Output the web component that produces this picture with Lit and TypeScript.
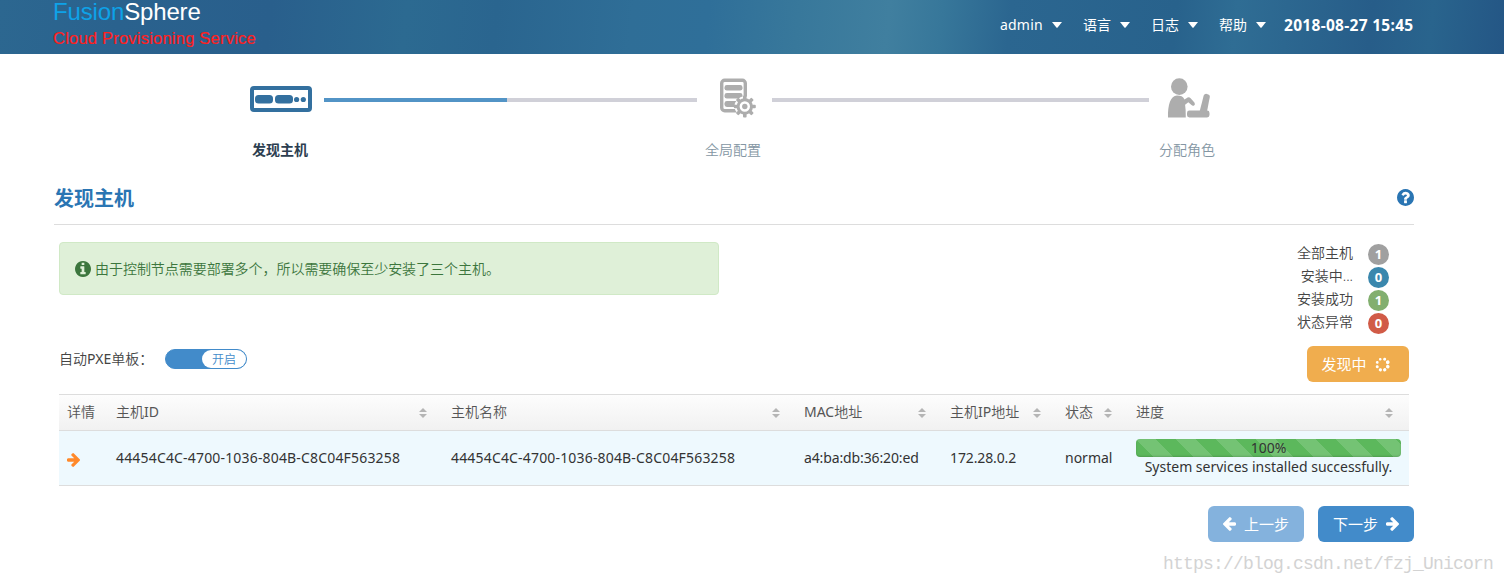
import { LitElement, html, css, svg } from "lit";
import { customElement, property } from "lit/decorators.js";

const ARROW =
  "M1472 896q0 54-37 91l-651 651q-39 37-91 37-51 0-90-37l-75-75q-38-38-38-91t38-91l293-293H117q-52 0-84.5-37.5T0 960V832q0-53 32.5-90.5T117 704h704L528 410q-38-36-38-90t38-90l75-75q38-38 90-38 53 0 91 38l651 651q37 35 37 90z";
const DISC =
  "M1664 896q0 209-103 385.5T1281.5 1561 896 1664t-385.5-103T231 1281.5 128 896t103-385.5T510.5 231 896 128t385.5 103T1561 510.5 1664 896z";
const INFO =
  "M1152 1376v-160q0-14-9-23t-23-9h-96V672q0-14-9-23t-23-9H672q-14 0-23 9t-9 23v160q0 14 9 23t23 9h96v320h-96q-14 0-23 9t-9 23v160q0 14 9 23t23 9h448q14 0 23-9t9-23zM1024 480V320q0-14-9-23t-23-9H800q-14 0-23 9t-9 23v160q0 14 9 23t23 9h192q14 0 23-9t9-23z";
const QUESTION =
  "M1024 1376v-192q0-14-9-23t-23-9H800q-14 0-23 9t-9 23v192q0 14 9 23t23 9h192q14 0 23-9t9-23zm256-672q0-88-55.5-163T1086 425t-170-41q-243 0-371 213-15 24 8 42l132 100q7 6 19 6 16 0 25-12 53-68 86-92 34-24 86-24 48 0 85.5 26t37.5 59q0 38-20 61t-68 45q-63 28-115.5 86.5T768 1020v36q0 14 9 23t23 9h192q14 0 23-9t9-23q0-19 21.5-49.5T1100 957q32-18 49-28.5t46-35 44.5-48 28-60.5 12.5-81z";

@customElement("ui-icon")
export class UiIcon extends LitElement {
  @property() name = "";
  static styles = css`
    :host { display: inline-flex; flex: none; }
    svg { display: block; fill: currentColor; overflow: visible; }
  `;
  render() {
    switch (this.name) {
      case "right":
        return html`<svg width="13" height="14" viewBox="0 117 1472 1558"><path d=${ARROW} /></svg>`;
      case "left":
        return html`<svg width="13" height="14" viewBox="0 117 1472 1558"><path transform="translate(1472 0) scale(-1 1)" d=${ARROW} /></svg>`;
      case "info":
        return html`<svg width="16" height="16" viewBox="128 128 1536 1536"><path fill-rule="evenodd" d=${INFO + DISC} /></svg>`;
      case "help":
        return html`<svg width="17" height="17" viewBox="128 128 1536 1536"><path fill-rule="evenodd" d=${QUESTION + DISC} /></svg>`;
      case "sort":
        return html`<svg width="8" height="10" viewBox="0 0 8 10"><path d="M4 0l4 4H0zM4 10L0 6h8z" /></svg>`;
      case "caret":
        return html`<svg width="10" height="6" viewBox="0 0 10 6"><path d="M0 0h10L5.6 5.6q-.6.5-1.2 0z" /></svg>`;
      case "spinner":
        return html`<svg width="15" height="15" viewBox="-7.5 -7.5 15 15">
          ${[1.85, 1.8, 1.7, 1.6, 1.5, 1.4, 1.3, 1.5].map(
            (r, i) => svg`<circle r=${r} cy="-5.7" transform=${`rotate(${i * 45 + 67})`} />`
          )}
        </svg>`;
      case "server":
        return html`<svg width="62" height="26" viewBox="0 0 62 26">
          <rect x="2" y="2" width="58" height="22" rx="2" fill="#fff" stroke="#33709f" stroke-width="4" />
          <rect x="5" y="9" width="18" height="8.5" rx="3.5" /><rect x="25" y="9" width="18" height="8.5" rx="3.5" />
          <circle cx="46.6" cy="13.5" r="2.6" /><circle cx="53.3" cy="13.5" r="2.6" />
        </svg>`;
      case "config":
        return html`<svg width="36" height="40" viewBox="0 0 36 40">
          <rect x="1.7" y="2.2" width="23.6" height="30.6" rx="3" fill="#fff" stroke="currentColor" stroke-width="3.4" />
          <rect x="4.5" y="7" width="18" height="5.6" rx="2.4" /><rect x="4.5" y="15" width="18" height="5.6" rx="2.4" />
          <rect x="4.5" y="23" width="14" height="6" rx="2.4" />
          <circle cx="24.8" cy="28.5" r="10.3" fill="#fff" />
          <g transform="translate(24.8 28.5)">
            ${[0, 45, 90, 135, 180, 225, 270, 315].map(
              (a) => svg`<rect x="-1.8" y="-11" width="3.6" height="5" rx="1" transform=${`rotate(${a})`} />`
            )}
            <circle r="6.7" fill="#fff" stroke="currentColor" stroke-width="3" />
            <circle r="2.7" />
          </g>
        </svg>`;
      case "person":
        return html`<svg width="44" height="40" viewBox="0 0 44 40">
          <circle cx="12.3" cy="8.6" r="8.3" />
          <path d="M1 39.5C.7 27 3.5 17.6 10 17.6c3.8 0 6 1 7.5 3.8l3.1-1.8q1.5-.8 3 .6l3.8 4.2q1.3 2-.3 3.1-1.5.8-2.9-.7l-2.900-2.500-3.200 2.500q.8 5 .7 12.700z" />
          <rect x="20" y="32.5" width="22.5" height="7" rx="2.4" />
          <path d="M32.5 34l4.2-16.5q.8-2 3.2-1.6 3.2.6 2.9 3.2L39.5 36z" />
        </svg>`;
    }
    return html``;
  }
}

@customElement("app-root")
export class AppRoot extends LitElement {
  static styles = css`
    * { box-sizing: border-box; }
    :host {
      display: block; position: relative; height: 583px; overflow: hidden; background: #fff;
      font: 14px/20px "Noto Sans", "Noto Sans CJK SC", sans-serif; color: #333; white-space: nowrap;
    }
    .top {
      height: 54px; padding: 0 90px 0 54px; display: flex; justify-content: space-between;
      color: #fff;
      background: linear-gradient(96deg, #2c6790 0, #2a628e 8%, #295f8c 18%, #2c6a91 27%, #2a658f 33%, #2f6e97 42%, #2f6f99 47%, #38789b 53%, #407f9f 59%, #37779a 62.5%, #2b6690 67%, #28628c 78%, #2f6d94 82%, #275d89 91%, #29648d 95%, #245685 100%);
    }
    .logo { font-family: "Liberation Sans", sans-serif; display: flex; flex-direction: column; }
    .brand { font-size: 24px; line-height: 24px; letter-spacing: -0.15px; margin-left: -1px; }
    .brand .fusion { color: #0ea2e8; }
    .sub { color: #ff2020; font-size: 16.5px; line-height: 18px; margin: 5px 0 0 -1px; letter-spacing: 0.22px; -webkit-text-stroke: 0.2px #ff2020; }
    .menu { display: flex; height: 50px; align-items: center; }
    .item { display: flex; align-items: center; justify-content: space-between; margin-right: 21px; }
    .item:nth-last-child(2) { margin-right: 18px; }
    .admin { width: 62px; } .lang { width: 47px; }
    .admin span { letter-spacing: 0.2px; }
    .time { font-weight: 700; font-size: 15.5px; width: 130px; letter-spacing: 0.3px; }
    .main { margin: 0 90px 0 54px; }
    .steps { display: flex; height: 116px; padding-left: 182px; }
    .step { display: flex; flex-direction: column; align-items: center; color: #8496a3; font-weight: 350; }
    .pic { height: 86px; display: flex; align-items: center; padding-top: 6px; color: #adadad; }
    .on { color: #2c3e50; font-weight: 700; }
    .on .pic { color: #33709f; padding: 4px 0 0 1px; }
    .s1 { width: 88px; } .s2 { width: 72px; margin-right: 3px; } .s3 { width: 76px; }
    .s2 .pic { padding: 1px 0 0 10px; } .s3 .pic { padding: 1px 0 0 4px; }
    .line { height: 4px; margin-top: 44px; background: #d0d0d8; }
    .l1 { width: 373px; } .l2 { width: 377px; }
    .done { width: 183px; height: 4px; background: #5294c6; }
    .title { height: 55px; border-bottom: 1px solid #ddd; display: flex; align-items: center; justify-content: space-between; color: #2a75b3; }
    .title h1 { margin: 4px 0 0; font-size: 20px; line-height: 28px; }
    .body { padding: 0 5px; }
    .info { display: flex; justify-content: space-between; height: 121px; padding-top: 17px; }
    .alert {
      width: 660px; height: 53px; border: 1px solid #d0e9c6; border-radius: 4px; background: #dff0d8;
      color: #3c763d; display: flex; align-items: center; gap: 4px; padding-left: 15px; font-weight: 350; letter-spacing: -0.04px;
    }
    .stats { display: grid; grid-auto-rows: 23px; padding-right: 20px; color: #444; font-weight: 350; }
    .stat { display: flex; align-items: center; justify-content: flex-end; gap: 15px; }
    .stat .lbl { margin-top: -2px; }
    .badge { width: 21px; height: 21px; border-radius: 50%; margin-top: 2px; color: #fff; font-weight: 700; font-size: 13px; line-height: 21px; text-align: center; }
    .grey { background: #a0a0a0; } .blue { background: #3a87ad; } .green { background: #82af6f; } .red { background: #d15b47; }
    .tools { display: flex; justify-content: space-between; height: 48px; }
    .pxe { display: flex; align-items: center; height: 26px; color: #444; font-weight: 350; }
    .pxe .cap { width: 106px; }
    .lat { font-weight: 400; }
    .switch { width: 82px; height: 20px; border-radius: 10px; background: #428bca; border: 1px solid #428bca; display: flex; justify-content: flex-end; }
    .knob { width: 44px; height: 18px; border-radius: 9px; background: #fff; color: #428bca; font-size: 12px; line-height: 20px; text-align: center; }
    .btn { height: 36px; border-radius: 6px; display: flex; align-items: center; justify-content: center; color: #fff; font-size: 15px; gap: 8px; }
    .find { width: 102px; background: #f0ad4e; gap: 8px; padding-right: 5px; }
    .nav { width: 96px; background: #428bca; }
    .prev { background: #84b2dd; }
    .row { display: grid; grid-template-columns: 49px 335px 353px 146px 115px 71px 281px; }
    .head { height: 37px; border-top: 1px solid #ddd; border-bottom: 1px solid #ddd; background: linear-gradient(#fdfdfd, #f1f1f1); color: #555; font-weight: 350; }
    .cell { padding: 0 8px; display: flex; align-items: center; }
    .head .cell { justify-content: space-between; padding: 0 16px 2px 8px; }
    .head ui-icon { color: #b5b5b5; padding-top: 3px; }
    .data { height: 55px; border-bottom: 1px solid #ddd; background: #eef9fe; color: #333; }
    .detail { color: #ff892a; padding-top: 4px; }
    .id { letter-spacing: 0.17px; }
    .addr { letter-spacing: -0.13px; }
    .progress { flex-direction: column; align-items: stretch; justify-content: flex-start; padding-top: 8px; text-align: center; }
    .bar {
      height: 18px; line-height: 18px; border-radius: 4px; color: #333; background-color: #5cb85c; background-size: 40px 40px;
      background-image: linear-gradient(45deg, rgba(255,255,255,.15) 25%, transparent 25%, transparent 50%, rgba(255,255,255,.15) 50%, rgba(255,255,255,.15) 75%, transparent 75%);
      box-shadow: inset 0 -1px 2px rgba(0,0,0,.15);
    }
    .foot { display: flex; justify-content: flex-end; gap: 14px; padding-top: 20px; }
    .mark { position: absolute; right: 11px; bottom: 7px; font: 18px/24px "Liberation Mono", monospace; letter-spacing: -0.8px; color: #d3d3d3; }
  `;

  head(label: unknown, sortable = true) {
    return html`<div class="cell"><span>${label}</span>${sortable ? html`<ui-icon name="sort"></ui-icon>` : ""}</div>`;
  }

  stat(label: unknown, n: number, tone: string) {
    return html`<div class="stat"><span class="lbl">${label}</span><span class="badge ${tone}">${n}</span></div>`;
  }

  render() {
    const id = "44454C4C-4700-1036-804B-C8C04F563258";
    const lat = (t: string) => html`<span class="lat">${t}</span>`;
    return html`
      <header class="top">
        <div class="logo">
          <div class="brand"><span class="fusion">Fusion</span>Sphere</div>
          <div class="sub">Cloud Provisioning Service</div>
        </div>
        <nav class="menu">
          <div class="item admin"><span>admin</span><ui-icon name="caret"></ui-icon></div>
          ${["语言", "日志", "帮助"].map((t) => html`<div class="item lang"><span>${t}</span><ui-icon name="caret"></ui-icon></div>`)}
          <div class="time">2018-08-27 15:45</div>
        </nav>
      </header>
      <main class="main">
        <div class="steps">
          <div class="step s1 on"><div class="pic"><ui-icon name="server"></ui-icon></div>发现主机</div>
          <div class="line l1"><div class="done"></div></div>
          <div class="step s2"><div class="pic"><ui-icon name="config"></ui-icon></div>全局配置</div>
          <div class="line l2"></div>
          <div class="step s3"><div class="pic"><ui-icon name="person"></ui-icon></div>分配角色</div>
        </div>
        <div class="title"><h1>发现主机</h1><ui-icon name="help"></ui-icon></div>
        <div class="body">
          <div class="info">
            <div class="alert"><ui-icon name="info"></ui-icon><span>由于控制节点需要部署多个，所以需要确保至少安装了三个主机。</span></div>
            <div class="stats">
              ${this.stat("全部主机", 1, "grey")} ${this.stat("安装中...", 0, "blue")}
              ${this.stat("安装成功", 1, "green")} ${this.stat("状态异常", 0, "red")}
            </div>
          </div>
          <div class="tools">
            <div class="pxe"><span class="cap">自动${lat("PXE")}单板：</span><div class="switch"><div class="knob">开启</div></div></div>
            <div class="btn find"><span>发现中</span><ui-icon name="spinner"></ui-icon></div>
          </div>
          <div class="row head">
            ${this.head("详情", false)} ${this.head(html`主机${lat("ID")}`)} ${this.head("主机名称")} ${this.head(html`${lat("MAC")}地址`)}
            ${this.head(html`主机${lat("IP")}地址`)} ${this.head("状态")} ${this.head("进度")}
          </div>
          <div class="row data">
            <div class="cell detail"><ui-icon name="right"></ui-icon></div>
            <div class="cell id">${id}</div>
            <div class="cell id">${id}</div>
            <div class="cell addr">a4:ba:db:36:20:ed</div>
            <div class="cell addr">172.28.0.2</div>
            <div class="cell">normal</div>
            <div class="cell progress"><div class="bar">100%</div><div>System services installed successfully.</div></div>
          </div>
        </div>
        <div class="foot">
          <div class="btn nav prev"><ui-icon name="left"></ui-icon><span>上一步</span></div>
          <div class="btn nav"><span>下一步</span><ui-icon name="right"></ui-icon></div>
        </div>
      </main>
      <div class="mark">https://blog.csdn.net/fzj_Unicorn</div>
    `;
  }
}
